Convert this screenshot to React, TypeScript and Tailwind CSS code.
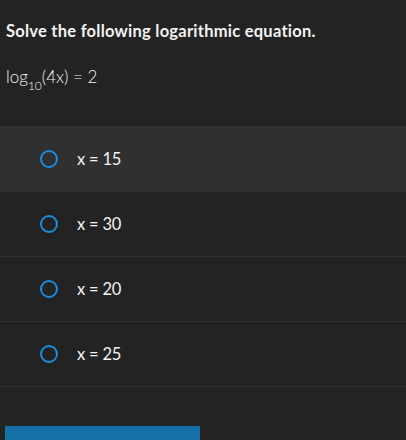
import { useState } from 'react';

const options = ['x = 15', 'x = 30', 'x = 20', 'x = 25'];

export default function App() {
  const [hovered] = useState(0);

  return (
    <div className="h-[440px] w-full bg-[#232323] text-[#f2f2f2] overflow-hidden" style={{ fontFamily: 'Lato, "Open Sans", sans-serif' }}>
      <div className="px-[6px] pt-[21px]">
        <h1 className="text-[16.5px] font-bold leading-[20px] tracking-[0.25px]">
          Solve the following logarithmic equation.
        </h1>
        <p className="mt-[26px] text-[17px] font-light leading-[20px]">
          log<sub className="text-[12px] align-[-4px]">10</sub>(4x) = 2
        </p>
      </div>

      <ul className="mt-[39px]">
        {options.map((opt, i) => (
          <li
            key={opt}
            className={
              'flex items-center gap-[19px] pl-[40px] ' +
              (i === hovered ? 'h-[66px] bg-[#303030]' : 'h-[65px] border-b border-[#333333]')
            }
          >
            <span className="h-[18px] w-[18px] rounded-full border-2 border-[#1b8bdb]" />
            <span className="text-[16.5px] leading-none tracking-[-0.2px]">{opt}</span>
          </li>
        ))}
      </ul>

      <div className="px-[5px] pt-[39px]">
        <button className="block h-[14px] w-[195px] bg-[#1670a8]" />
      </div>
    </div>
  );
}
